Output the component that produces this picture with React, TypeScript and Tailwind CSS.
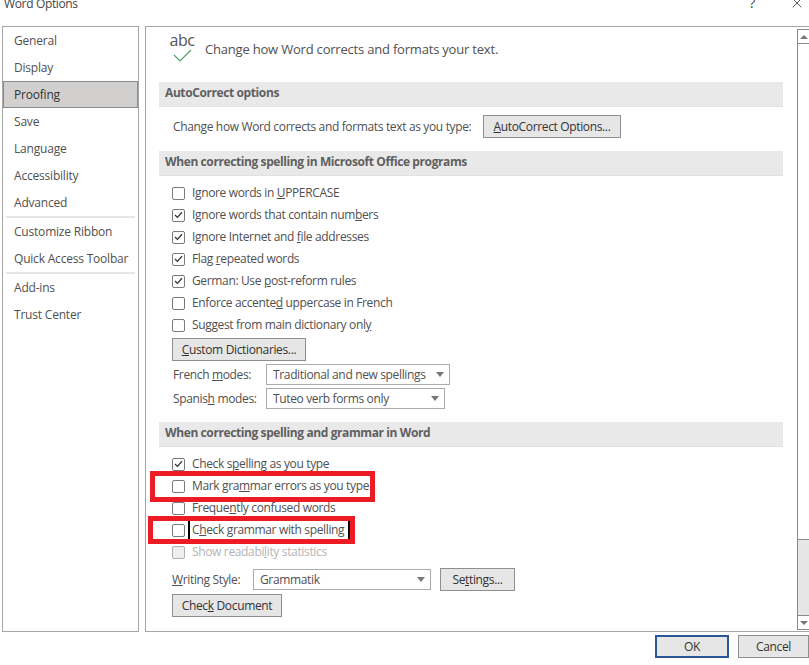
import type { ReactNode } from "react";
import { X } from "lucide-react";

const navTop = ["General", "Display", "Proofing", "Save", "Language", "Accessibility", "Advanced"];
const navMid = ["Customize Ribbon", "Quick Access Toolbar"];
const navEnd = ["Add-ins", "Trust Center"];

function NavItem({ label }: { label: string }) {
    const active = label === "Proofing";
    return (
        <div className={`h-[27px] flex items-center tracking-[-0.2px] ${active ? "bg-[#d2d0ce] border border-[#8a8a8a] pl-[10px] text-[#333]" : "pl-[11px]"}`}>
            {label}
        </div>
    );
}

function SectionBar({ children }: { children: ReactNode }) {
    return (
        <div className="h-[25px] bg-[#e9e9e9] border-b border-[#e2e2e2] pl-[6px] pb-[2px] flex items-center font-bold tracking-[-0.4px] text-[#606060]">
            {children}
        </div>
    );
}

function Check({ label, checked, disabled }: { label: ReactNode; checked?: boolean; disabled?: boolean }) {
    return (
        <div className={`h-[22px] flex items-center gap-[7px] pl-[13px] ${disabled ? "text-[#b4b4b4]" : ""}`}>
            <span className={`w-[13px] h-[13px] border rounded-[2px] flex items-center justify-center ${disabled ? "border-[#b0b0b0] bg-[#efefef]" : "border-[#7a7a7a] bg-white"}`}>
                {checked && (
                    <svg width="9" height="8" viewBox="0 0 9 8" fill="none">
                        <path d="M1 4 L3.4 6.4 L8 1.2" stroke="#333" strokeWidth="1.3" />
                    </svg>
                )}
            </span>
            <span>{label}</span>
        </div>
    );
}

function Btn({ children, className = "" }: { children: ReactNode; className?: string }) {
    return (
        <button className={`h-[23px] bg-[#e6e6e6] text-[#333] flex items-center justify-center ${className}`}>
            {children}
        </button>
    );
}

function Select({ value, className = "" }: { value: string; className?: string }) {
    return (
        <div className={`h-[21px] bg-white border border-[#ababab] pl-[6px] pr-[5px] flex items-center justify-between ${className}`}>
            <span>{value}</span>
            <svg width="8" height="5" viewBox="0 0 8 5" className="fill-[#777]">
                <path d="M0 0 H8 L4 5 Z" />
            </svg>
        </div>
    );
}

export default function App() {
    return (
        <div className="relative w-[809px] h-[665px] overflow-hidden bg-white text-[12px] text-[#505050] font-['Open_Sans','Liberation_Sans',sans-serif] tracking-[-0.35px] flex flex-col">
            <div className="h-[26px] flex justify-between overflow-hidden">
                <span className="-mt-[6px] ml-[4px] text-[12px] tracking-[-0.35px] text-[#444] leading-[20px]">Word Options</span>
                <div className="flex items-start">
                    <span className="-mt-[7px] text-[14px] leading-[20px] text-[#444]">?</span>
                    <X size={16} strokeWidth={1.2} className="-mt-[5px] ml-[34px] mr-[4px] text-[#333]" />
                </div>
            </div>

            <div className="h-[606px] flex pl-[2px]">
                <div className="w-[137px] border border-[#a6a6a6]">
                    {navTop.map((n) => <NavItem key={n} label={n} />)}
                    <div className="h-[2px] bg-[#e6e6e6] mx-[3px]" />
                    {navMid.map((n) => <NavItem key={n} label={n} />)}
                    <div className="h-[2px] bg-[#e6e6e6] mx-[3px]" />
                    {navEnd.map((n) => <NavItem key={n} label={n} />)}
                </div>

                <div className="ml-[6px] flex-1 flex border-y border-l border-[#a6a6a6]">
                    <div className="flex-1 pl-[13px] pr-[14px]">
                        <div className="h-[55px] flex">
                            <div className="ml-[10px] mt-[3px] w-[26px] flex flex-col items-center">
                                <span className="text-[16px] leading-[20px] tracking-[-0.4px] text-[#555]">abc</span>
                                <svg width="19" height="13" viewBox="0 0 19 13" fill="none" className="-mt-px">
                                    <path d="M1 6 L7 12 L18 1" stroke="#4aa564" strokeWidth="1.2" />
                                </svg>
                            </div>
                            <span className="ml-[10px] mt-[13px] text-[13px] leading-[18px] tracking-[-0.2px]">Change how Word corrects and formats your text.</span>
                        </div>

                        <SectionBar>AutoCorrect options</SectionBar>
                        <div className="h-[44px] pl-[14px] pb-[5px] flex items-center">
                            <span className="w-[310px]">Change how Word corrects and formats text as you type:</span>
                            <Btn className="w-[138px] border border-[#8f8f8f]"><span><u>A</u>utoCorrect Options...</span></Btn>
                        </div>

                        <SectionBar>When correcting spelling in Microsoft Office programs</SectionBar>
                        <div className="pt-[6px]">
                            <Check label={<>Ignore words in <u>U</u>PPERCASE</>} />
                            <Check checked label={<>Ignore words that contain num<u>b</u>ers</>} />
                            <Check checked label={<>Ignore Internet and <u>f</u>ile addresses</>} />
                            <Check checked label={<>Flag <u>r</u>epeated words</>} />
                            <Check checked label={<>German: Use <u>p</u>ost-reform rules</>} />
                            <Check label={<>Enforce accente<u>d</u> uppercase in French</>} />
                            <Check label={<>Suggest from main dictionary onl<u>y</u></>} />
                        </div>
                        <Btn className="ml-[13px] mt-[2px] w-[134px] border border-[#8f8f8f]"><span><u>C</u>ustom Dictionaries...</span></Btn>
                        <div className="mt-[3px] ml-[14px] h-[21px] flex items-center">
                            <span className="w-[93px]">French <u>m</u>odes:</span>
                            <Select value="Traditional and new spellings" className="w-[184px]" />
                        </div>
                        <div className="mt-[3px] ml-[14px] h-[21px] flex items-center">
                            <span className="w-[93px]">Spanis<u>h</u> modes:</span>
                            <Select value="Tuteo verb forms only" className="w-[179px]" />
                        </div>

                        <div className="mt-[13px]">
                            <SectionBar>When correcting spelling and grammar in Word</SectionBar>
                        </div>
                        <div className="pt-[6px]">
                            <Check checked label={<>Check s<u>p</u>elling as you type</>} />
                            <Check label={<>Mark gra<u>m</u>mar errors as you type</>} />
                            <Check label={<>Freque<u>n</u>tly confused words</>} />
                            <Check label={<>C<u>h</u>eck grammar with spelling</>} />
                            <Check disabled label={<>Show readabi<u>l</u>ity statistics</>} />
                        </div>
                        <div className="mt-[5px] ml-[13px] h-[23px] flex items-center">
                            <span className="w-[81px]"><u>W</u>riting Style:</span>
                            <Select value="Grammatik" className="w-[178px]" />
                            <Btn className="ml-[9px] w-[75px] border border-[#8f8f8f]"><span>Se<u>t</u>tings...</span></Btn>
                        </div>
                        <Btn className="ml-[13px] mt-[3px] w-[110px] border border-[#8f8f8f]"><span>Chec<u>k</u> Document</span></Btn>
                    </div>

                    <div className="w-[12px] mt-[2px] mb-px border-l border-[#8a8a8a] flex flex-col">
                        <div className="h-[15px] border-y border-[#8a8a8a] flex items-center justify-center">
                            <svg width="8" height="4" viewBox="0 0 8 4" className="fill-[#777]"><path d="M0 4 H8 L4 0 Z" /></svg>
                        </div>
                        <div className="h-[496px] bg-white border-b border-[#8a8a8a]" />
                        <div className="flex-1 bg-[#e6e6e6]" />
                        <div className="h-[15px] border-y border-[#8a8a8a] flex items-center justify-center">
                            <svg width="8" height="4" viewBox="0 0 8 4" className="fill-[#777]"><path d="M0 0 H8 L4 4 Z" /></svg>
                        </div>
                    </div>
                </div>
            </div>

            <div className="mt-[3px] pl-[655px] flex">
                <Btn className="w-[75px] border-2 border-[#2b579a]">OK</Btn>
                <Btn className="ml-[9px] w-[72px] border border-[#8f8f8f]">Cancel</Btn>
            </div>

            {/* annotations drawn over the screenshot */}
            <div className="absolute left-[150px] top-[471px] w-[225px] h-[31px] border-[5px] border-[#ed1c24]" />
            <div className="absolute left-[148px] top-[516px] w-[207px] h-[28px] border-[5px] border-[#ed1c24]" />
            <div className="absolute left-[188px] top-[521px] w-[162px] h-[18px] border-x-2 border-black" />
        </div>
    );
}
